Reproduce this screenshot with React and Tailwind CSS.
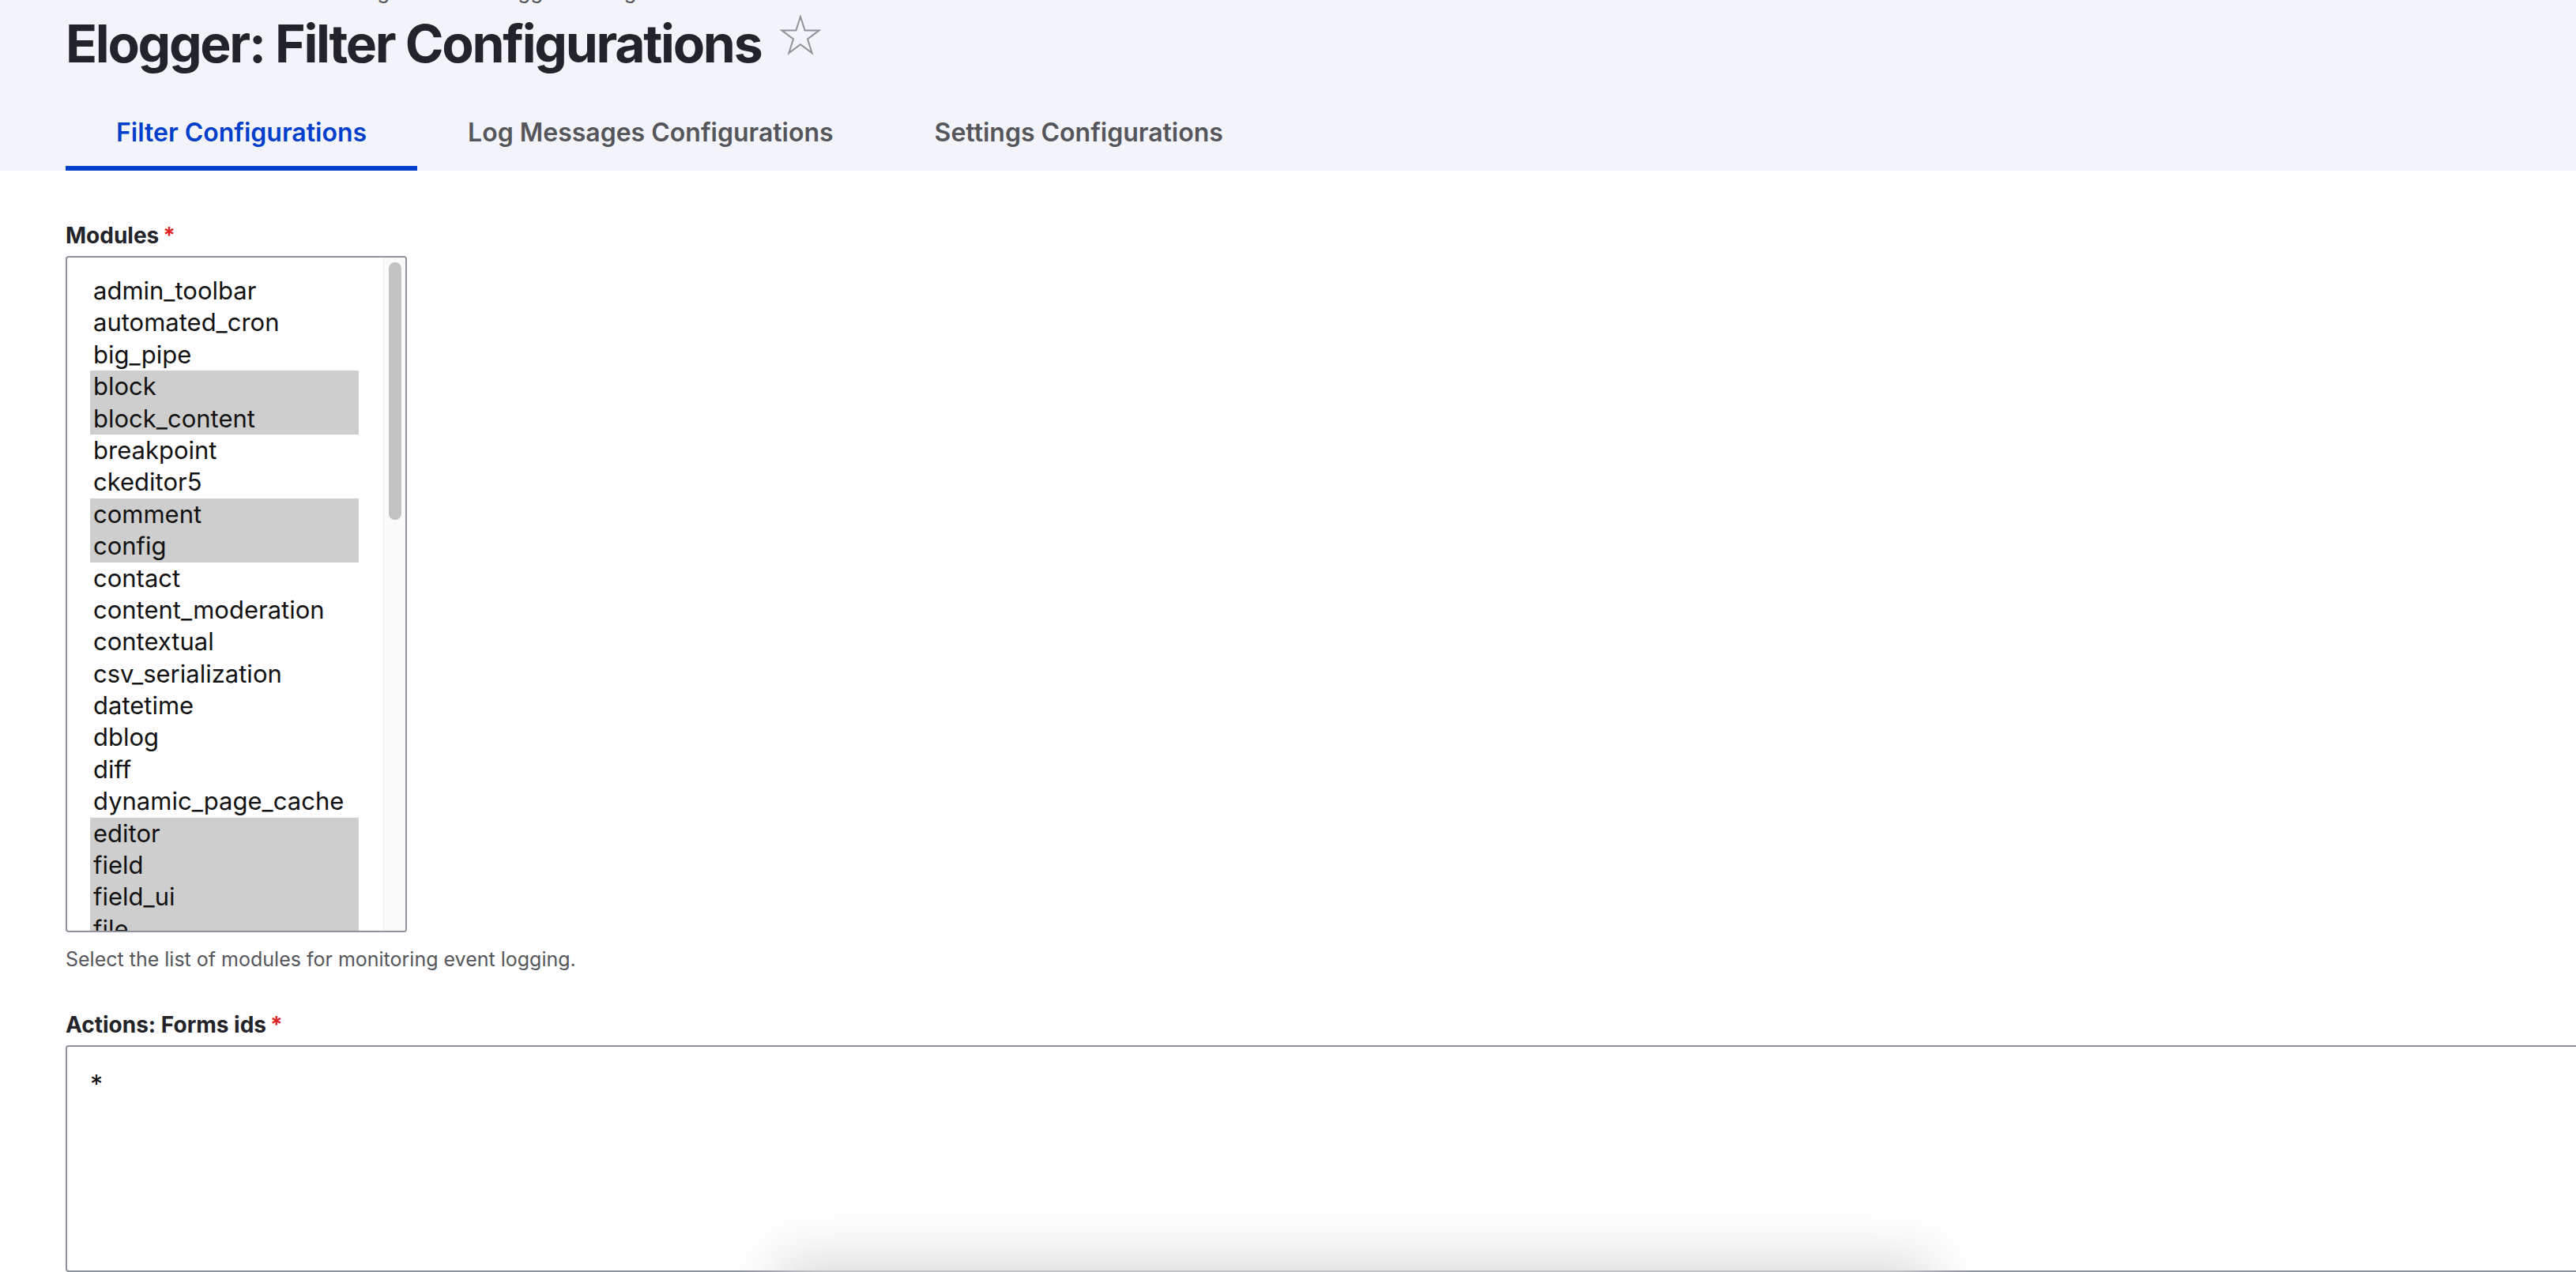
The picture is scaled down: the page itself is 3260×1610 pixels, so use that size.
import React from 'react';

const modules = [
  { name: 'admin_toolbar' },
  { name: 'automated_cron' },
  { name: 'big_pipe' },
  { name: 'block', selected: true },
  { name: 'block_content', selected: true },
  { name: 'breakpoint' },
  { name: 'ckeditor5' },
  { name: 'comment', selected: true },
  { name: 'config', selected: true },
  { name: 'contact' },
  { name: 'content_moderation' },
  { name: 'contextual' },
  { name: 'csv_serialization' },
  { name: 'datetime' },
  { name: 'dblog' },
  { name: 'diff' },
  { name: 'dynamic_page_cache' },
  { name: 'editor', selected: true },
  { name: 'field', selected: true },
  { name: 'field_ui', selected: true },
  { name: 'file', selected: true },
  { name: 'filter' },
];

const tabs = [
  { label: 'Filter Configurations', active: true },
  { label: 'Log Messages Configurations' },
  { label: 'Settings Configurations' },
];

const StarIcon = () => (
  <svg width="52" height="52" viewBox="0 0 52 52" fill="none" className="ml-[24px] mt-[4px] shrink-0">
    <path
      d="M26 2 L31.6 19.6 L49.5 19.6 L35 30.4 L40.6 48 L26 37.2 L11.4 48 L17 30.4 L2.5 19.6 L20.4 19.6 Z"
      stroke="#8e929c"
      strokeWidth="2"
      strokeLinejoin="miter"
    />
  </svg>
);

const Label = ({ children }) => (
  <div className="flex items-start text-[28px] leading-[36px] font-bold text-[#232429]">
    <span>{children}</span>
    <span className="ml-[5px] text-[#dc2323]">*</span>
  </div>
);

const App = () => {
  return (
    <div
      className="relative flex h-[1610px] w-full flex-col overflow-hidden bg-white"
      style={{ fontFamily: 'Inter, "Noto Sans", sans-serif' }}
    >
      <header className="flex h-[216px] shrink-0 flex-col bg-[#f3f4f9] px-[83px]">
        <div className="-mt-[26px] h-[30px] whitespace-nowrap text-[26px] leading-[30px] text-[#55565b]">
          Home&nbsp;&nbsp;›&nbsp;&nbsp;Administration&nbsp;&nbsp;›&nbsp;&nbsp;Configuration&nbsp;&nbsp;›&nbsp;&nbsp;Elogger Settings
        </div>
        <div className="mt-[11px] flex items-start">
          <h1 className="whitespace-nowrap text-[66px] font-bold leading-[80px] tracking-[-2.3px] text-[#232429]">
            Elogger: Filter Configurations
          </h1>
          <StarIcon />
        </div>
        <nav className="mt-[29px] flex">
          {tabs.map((tab) => (
            <div
              key={tab.label}
              className={
                tab.active
                  ? 'border-b-[6px] border-[#003ecc] px-[64px] pt-[24px] pb-[22px] text-[32px] font-semibold leading-[40px] text-[#003ecc]'
                  : 'border-b-[6px] border-transparent px-[64px] pt-[24px] pb-[22px] text-[32px] font-semibold leading-[40px] text-[#55565b]'
              }
            >
              {tab.label}
            </div>
          ))}
        </nav>
      </header>

      <main className="flex flex-col px-[83px]">
        <div className="mt-[64px]">
          <Label>Modules</Label>
        </div>

        <div className="mt-[8px] flex h-[856px] w-[432px] shrink-0 overflow-hidden rounded-[4px] border-2 border-[#8e929c] bg-white">
          <div className="w-[400px] overflow-hidden pl-[29px] pr-[31px] pt-[22px]">
            {modules.map((m) => (
              <div
                key={m.name}
                className={
                  m.selected
                    ? 'h-[40.4px] bg-[#cecece] pl-[4px] text-[31px] leading-[40.4px] text-[#111]'
                    : 'h-[40.4px] pl-[4px] text-[31px] leading-[40.4px] text-[#111]'
                }
              >
                {m.name}
              </div>
            ))}
          </div>
          <div className="w-[28px] border-l border-[#ececec] bg-[#fafafa] pt-[6px]">
            <div className="ml-[6px] h-[326px] w-[16px] rounded-full bg-[#c2c2c2]" />
          </div>
        </div>

        <p className="mt-[18px] text-[25px] leading-[32px] text-[#55565b]">
          Select the list of modules for monitoring event logging.
        </p>

        <div className="mt-[49px]">
          <Label>Actions: Forms ids</Label>
        </div>

        <div className="mt-[8px] h-[287px] w-[3260px] shrink-0 rounded-[4px] border-2 border-[#8e929c] bg-white pl-[29px] pt-[28px] text-[32px] leading-[40px] text-[#111]">
          *
        </div>
      </main>

      <div className="pointer-events-none absolute left-[985px] top-[1592px] h-[100px] w-[1460px] bg-[#dadada] blur-[34px]" />
    </div>
  );
};

export default App;
